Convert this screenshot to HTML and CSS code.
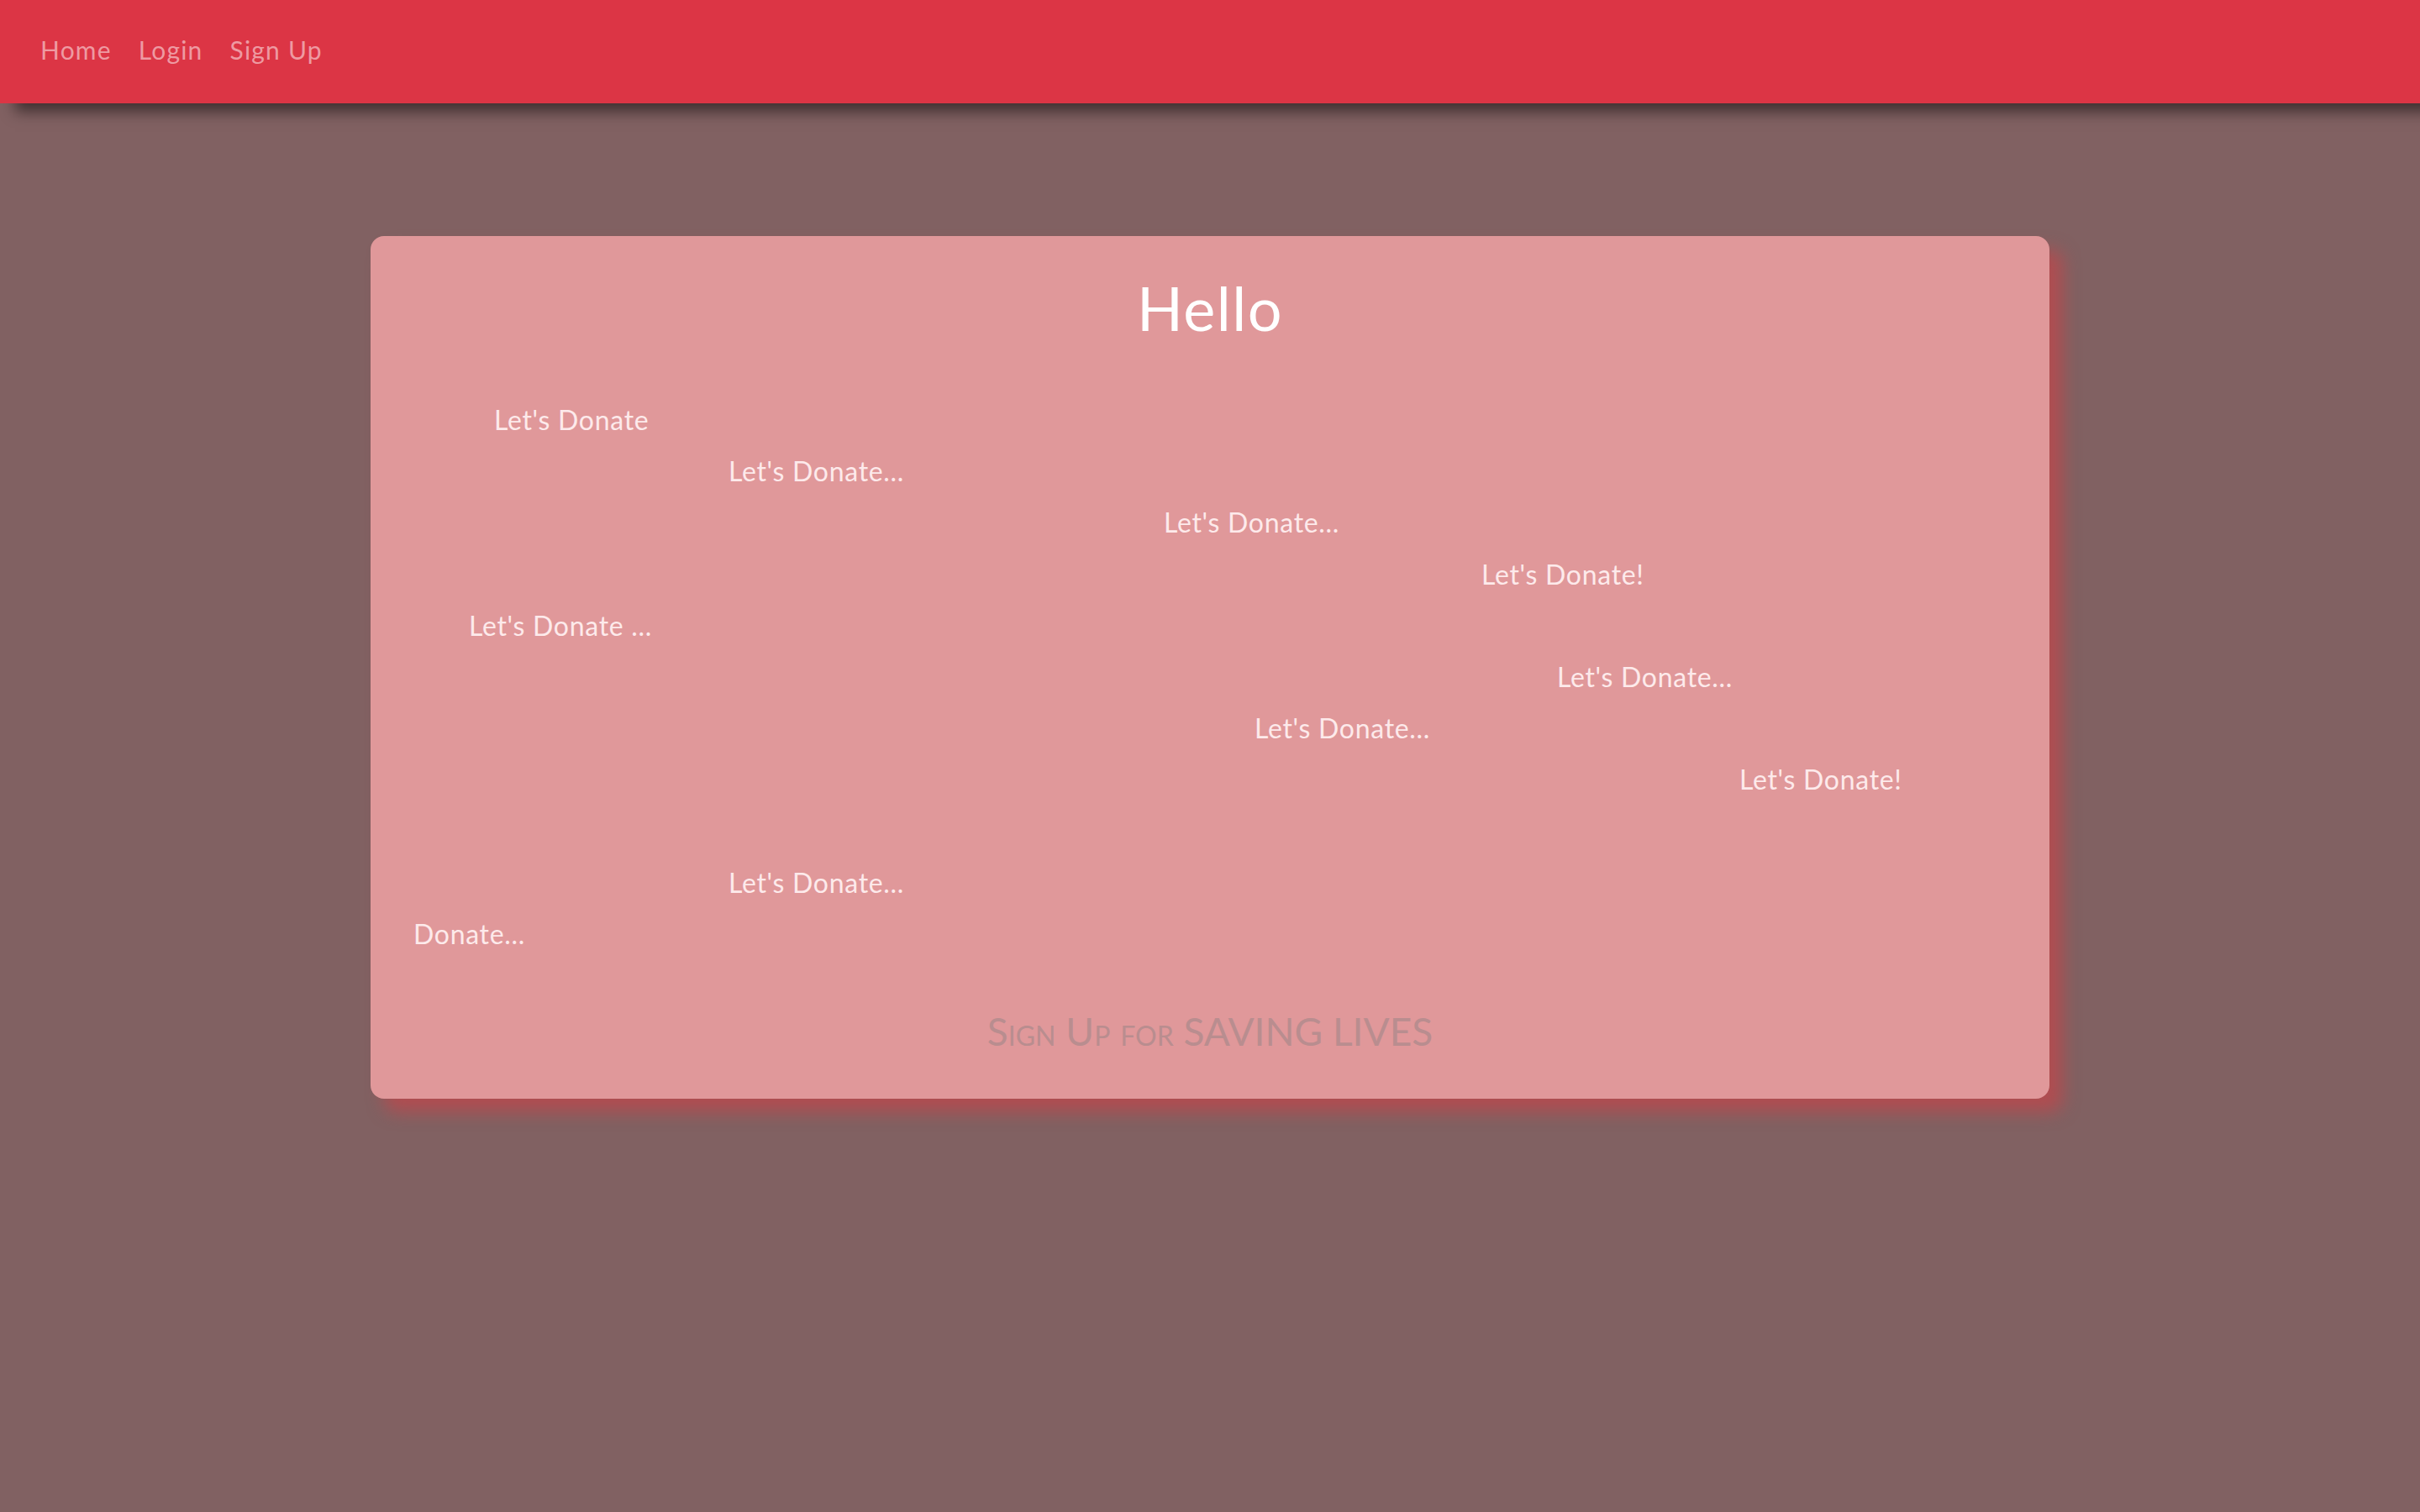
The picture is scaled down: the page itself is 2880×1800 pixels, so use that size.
FILE: index.html
```html
<!DOCTYPE html>
<html lang="en">
<head>
  <meta charset="UTF-8">
  <title>Let's Donate</title>
  <link rel="stylesheet" href="styles.css">
</head>
<body>
  <nav class="navbar">
    <a href="#" class="nav-link">Home</a>
    <a href="#" class="nav-link">Login</a>
    <a href="#" class="nav-link">Sign Up</a>
  </nav>
  <main class="card">
    <h1>Hello</h1>
    <div class="ticker">
      <div class="row"><span class="m1">Let's Donate</span></div>
      <div class="row"><span class="m2">Let's Donate...</span></div>
      <div class="row"><span class="m3">Let's Donate...</span></div>
      <div class="row"><span class="m4">Let's Donate!</span></div>
      <div class="row"><span class="m5">Let's Donate ...</span></div>
      <div class="row"><span class="m6">Let's Donate...</span></div>
      <div class="row"><span class="m7">Let's Donate...</span></div>
      <div class="row"><span class="m8">Let's Donate!</span></div>
      <div class="row"></div>
      <div class="row"><span class="m2">Let's Donate...</span></div>
      <div class="row"><span class="m10">Donate...</span></div>
    </div>
    <h3 class="signup">Sign Up for SAVING LIVES</h3>
  </main>
</body>
</html>
```

FILE: styles.css
```css
html, body {
  min-height: 100%;
}
body {
  margin: 0;
  padding: 0 0 80px 0;
  background: #816162;
  font-family: Lato, 'Open Sans', sans-serif;
  color: #fff;
}
.navbar {
  height: 123px;
  background: #dc3545;
  display: flex;
  align-items: center;
  gap: 32px;
  padding: 0 0 0 48px;
  box-shadow: 18px 10px 16px rgba(0,0,0,0.5);
}
.nav-link {
  color: #ee9aa2;
  text-decoration: none;
  font-size: 30px;
  line-height: 36px;
  letter-spacing: 1.2px;
  margin-top: -6px;
}
.card {
  width: 1998px;
  box-sizing: border-box;
  margin: 158px auto 0 auto;
  padding: 42px 48px 53px 48px;
  background: #e0989a;
  border-radius: 16px;
  box-shadow: 16px 16px 20px rgba(178,76,80,0.95);
}
h1 {
  margin: 0;
  font-size: 72px;
  line-height: 86px;
  font-weight: 400;
  letter-spacing: 1.5px;
  text-align: center;
  color: #fff;
}
.ticker {
  margin-top: 60px;
  overflow: hidden;
}
.row {
  height: 61.2px;
  line-height: 61.2px;
  font-size: 32px;
  letter-spacing: 0.7px;
  white-space: nowrap;
  color: #fdeaeb;
}
.row span { display: inline-block; }
.m1 { margin-left: 99px; }
.m2 { margin-left: 378px; }
.m3 { margin-left: 896px; }
.m4 { margin-left: 1274px; }
.m5 { margin-left: 69px; }
.m6 { margin-left: 1364px; }
.m7 { margin-left: 1004px; }
.m8 { margin-left: 1581px; }
.m10 { margin-left: 3px; }
.signup {
  margin: 58px 0 0 0;
  font-size: 46px;
  line-height: 55px;
  font-weight: 400;
  font-variant: small-caps;
  text-align: center;
  color: #b98d8f;
}
```
